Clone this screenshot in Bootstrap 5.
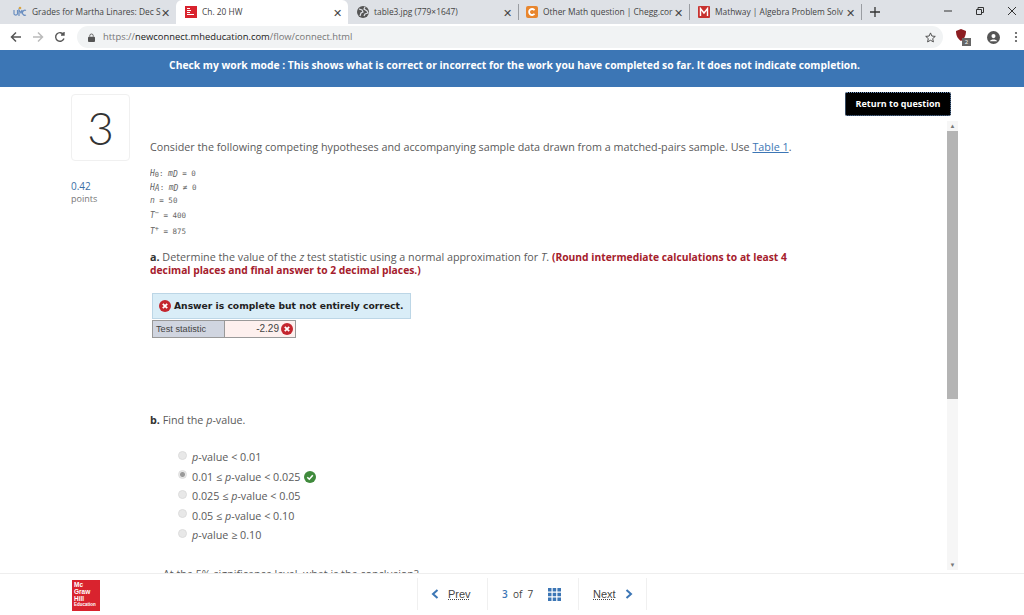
<!DOCTYPE html>
<html lang="en">
<head>
    <meta charset="UTF-8">
    <meta name="viewport" content="width=device-width, initial-scale=1.0">
    <title>Ch. 20 HW</title>
    <link href="https://cdn.jsdelivr.net/npm/bootstrap@5.3.0/dist/css/bootstrap.min.css" rel="stylesheet">
    <style>
        html, body { height: 615px; overflow: hidden; }
        body { font-family: "Open Sans", sans-serif; color: #5a5a5a; background: #fff; }

        /* browser chrome */
        .tab-strip { height: 24px; background: #dee1e6; font-size: 8.4px; color: #444; }
        .tab-item { height: 24px; padding: 0 5px 0 13px; gap: 5px; }
        .tab-item.is-on { background: #fff; border-radius: 6px 6px 0 0; }
        .tab-label { flex: 1; min-width: 0; white-space: nowrap; }
        .tab-x { font-size: 11px; color: #444; line-height: 1; width: 12px; text-align: center; flex: none; }
        .tab-sep { width: 1px; height: 16px; background: #9a9da2; }
        .tool-row { height: 26px; background: #fff; gap: 10px; padding: 0 6px 0 10px; }
        .url-pill { height: 22px; background: #f1f3f4; border-radius: 11px; font-size: 9.4px; color: #777; padding: 0 7px 0 11px; margin-left: 1px; margin-right: 2px; width: 866px; }
        .url-pill b { font-weight: 400; color: #222; }
        .ublock-wrap { width: 14px; height: 14px; margin-top: -2px; }
        .ublock-num { right: -2px; bottom: -3px; width: 9px; height: 8px; font-size: 6px; line-height: 8px; background: #666; color: #fff; text-align: center; }

        /* banner */
        .mode-banner { height: 37px; background: #3c76b5; color: #fff; font-size: 10.3px; font-weight: 700; line-height: 30px; text-align: center; padding-left: 5px; }

        /* question area */
        .q-area { height: 486px; }
        .q-side { width: 79px; margin-left: 71px; flex: none; }
        .q-numbox { width: 59px; height: 67px; margin-top: 7px; border: 1px solid #f0f0f0; border-radius: 4px; font-size: 46px; line-height: 66px; color: #333; text-align: center; font-family: "Lato", sans-serif; font-weight: 300; }
        .q-score { font-size: 10px; color: #3a6ea5; margin-top: 19px; line-height: 12px; }
        .q-pts { font-size: 9px; color: #777; line-height: 12px; margin-top: 1px; }
        .q-main { width: 650px; flex: none; overflow: hidden; padding-top: 53px; font-size: 10.75px; }
        .q-line { line-height: 14px; white-space: nowrap; }
        .q-main a { color: #3c76b5; }
        .hypo-list { margin-top: 13px; font-family: "DejaVu Sans Mono", monospace; font-size: 7.5px; color: #666; }
        .hypo-list div { height: 13.5px; line-height: 13.5px; }
        .hypo-list .tall { height: 16px; line-height: 16px; }
        .hypo-list i { font-size: 8px; }
        .hypo-list sub, .hypo-list sup { font-size: 7px; }
        .hypo-list sup { top: -0.3em; }
        .hypo-list sub { bottom: -0.2em; }
        .part-a { margin-top: 11px; line-height: 13px; }
        .part-tag { font-weight: 700; color: #333; }
        .warn-text { color: #a5202c; font-weight: 700; font-size: 10.3px; }
        .ans-box { width: 259px; height: 26px; margin-top: 16px; margin-left: 2px; background: #d9edf7; border: 1px solid #bcd6e6; font-family: "DejaVu Sans", sans-serif; font-size: 9.2px; font-weight: 700; color: #222; gap: 3px; padding-left: 6px; white-space: nowrap; }
        .ans-grid { width: 144px; height: 18px; margin-top: 1px; margin-left: 2px; border: 1px solid #999; font-family: "Liberation Sans", sans-serif; font-size: 9.2px; }
        .ans-key { width: 72px; background: #d0d5e0; border-right: 1px solid #999; padding-left: 3px; color: #444; line-height: 16px; }
        .ans-val { flex: 1; background: #fdf0ee; color: #444; gap: 2px; padding-right: 2px; font-size: 10px; }
        .part-b { margin-top: 75px; line-height: 14px; }
        .opt-list { margin-top: 21px; margin-left: 28px; }
        .opt-row { height: 19.5px; gap: 5px; white-space: nowrap; }
        .opt-dot { width: 9px; height: 9px; border-radius: 50%; background: #e8e8e8; border: 1px solid #ddd; margin-top: -4px; flex: none; }
        .opt-dot.is-on { background: radial-gradient(circle, #999 0 2px, #e8e8e8 3px); }
        .cut-line { margin-top: 21px; margin-left: 13px; white-space: nowrap; }

        .q-right { flex: 1; padding-right: 66px; }
        .back-btn { width: 106px; height: 24px; margin-top: 5px; margin-right: 7px; background: #000; color: #fff; font-size: 9px; font-weight: 700; border: 1px dotted #6d94c4; border-radius: 2px; padding: 0; line-height: 20px; flex: none; }
        .scroll-track { width: 11px; height: 449px; margin-top: 5px; background: #f6f6f6; }
        .scroll-btn { height: 10px; color: #777; font-size: 6px; line-height: 10px; text-align: center; flex: none; }
        .scroll-thumb { height: 268px; background: #b4b4b4; flex: none; }

        /* footer */
        .page-foot { height: 42px; border-top: 1px solid #eee; }
        .foot-logo { margin-left: 72px; width: 28px; height: 31px; background: #d9232e; color: #fff; font-family: "Liberation Sans", sans-serif; font-size: 6.5px; font-weight: 700; line-height: 6.8px; padding: 2px; margin-top: 6px; flex: none; }
        .foot-logo small { font-size: 4.5px; font-weight: 700; display: block; }
        .foot-nav { margin-left: 317px; margin-top: 4px; height: 32px; font-family: "Liberation Sans", sans-serif; font-size: 11px; color: #444; }
        .foot-cell { height: 32px; border-left: 1px solid #f0f0f0; }
        .foot-link { color: #444; text-decoration: underline dotted; }
        .foot-count { font-family: "Open Sans", sans-serif; font-size: 10px; }
        .foot-count b { color: #3c76b5; font-weight: 600; }
    </style>
</head>
<body>
    <!-- tabs -->
    <div class="tab-strip d-flex align-items-center">
        <div class="tab-item d-flex align-items-center" style="width:176px">
            <svg width="14" height="12" viewBox="0 0 14 12"><path d="M1 4v4a2 2 0 0 0 3.500 0V4M6 10V4l2 3 1-3M13 4.500a2.500 2.500 0 1 0 0 4.500" fill="none" stroke="#6b8fc0" stroke-width="1.200"/><circle cx="7" cy="2" r="1.300" fill="#d9a441"/></svg>
            <span class="tab-label">Grades for Martha Linares: Dec S</span><span class="tab-x">✕</span>
        </div>
        <div class="tab-item is-on d-flex align-items-center" style="width:172px;padding-left:9px">
            <svg width="12" height="12" viewBox="0 0 12 12"><rect width="12" height="12" fill="#d9232e"/><path d="M2 2.500h3M2 4.500h4M2 6.500h3M2 8.500h7" stroke="#fff" stroke-width="1"/></svg>
            <span class="tab-label">Ch. 20 HW</span><span class="tab-x">✕</span>
        </div>
        <div class="tab-item d-flex align-items-center" style="width:170px;padding-left:9px">
            <svg width="12" height="12" viewBox="0 0 12 12"><circle cx="6" cy="6" r="6" fill="#555"/><path d="M2 3l3 1 1 2-2 1-1 3M8 1L7 3l3 2 1 2-3 1-1 2" fill="none" stroke="#dee1e6" stroke-width="1.200"/></svg>
            <span class="tab-label">table3.jpg (779×1647)</span><span class="tab-x">✕</span>
        </div>
        <div class="tab-sep"></div>
        <div class="tab-item d-flex align-items-center" style="width:170px;padding-left:7px">
            <svg width="12" height="12" viewBox="0 0 12 12"><rect width="12" height="12" rx="2" fill="#e8862e"/><path d="M8.500 4.200a3 3 0 1 0 0 3.600" fill="none" stroke="#fff" stroke-width="1.800"/></svg>
            <span class="tab-label">Other Math question | Chegg.cor</span><span class="tab-x">✕</span>
        </div>
        <div class="tab-sep"></div>
        <div class="tab-item d-flex align-items-center" style="width:171px;padding-left:8px">
            <svg width="12" height="12" viewBox="0 0 12 12"><rect width="12" height="12" rx="1" fill="#c8322f"/><path d="M2.500 10V2.500L6 7l3.500-4.500V10" fill="none" stroke="#fff" stroke-width="1.400"/></svg>
            <span class="tab-label">Mathway | Algebra Problem Solv</span><span class="tab-x">✕</span>
        </div>
        <div class="tab-sep"></div>
        <svg class="ms-2" width="10" height="10" viewBox="0 0 10 10"><path d="M5 0v10M0 5h10" stroke="#333" stroke-width="1.300"/></svg>
        <div class="ms-auto d-flex align-items-center" style="gap:22px;padding-right:7px;margin-top:-3px">
            <svg width="10" height="10" viewBox="0 0 10 10"><path d="M1 5h8" stroke="#333"/></svg>
            <svg width="10" height="10" viewBox="0 0 10 10"><path d="M1.500 3.500h5v5h-5zM3 3.500V1.500h5.500v5H6.500" fill="none" stroke="#333"/></svg>
            <svg width="10" height="10" viewBox="0 0 10 10"><path d="M1 1l8 8M9 1l-8 8" stroke="#333"/></svg>
        </div>
    </div>

    <!-- toolbar -->
    <div class="tool-row d-flex align-items-center">
        <svg width="12" height="12" viewBox="0 0 12 12"><path d="M11 6H1.500M6 1.500L1.500 6 6 10.500" fill="none" stroke="#555" stroke-width="1.500"/></svg>
        <svg width="12" height="12" viewBox="0 0 12 12"><path d="M1 6h9.500M6 1.500L10.500 6 6 10.500" fill="none" stroke="#bbb" stroke-width="1.500"/></svg>
        <svg width="12" height="12" viewBox="0 0 12 12"><path d="M10 7.500A4.300 4.300 0 1 1 9.500 3.500M10 1v3H7" fill="none" stroke="#555" stroke-width="1.400"/></svg>
        <div class="url-pill d-flex align-items-center">
            <svg class="me-2" width="7" height="9" viewBox="0 0 8 10"><path d="M2 4V3a2 2 0 0 1 4 0v1" fill="none" stroke="#555"/><rect y="4" width="8" height="6" rx="1" fill="#555"/></svg>
            <span>https://<b>newconnect.mheducation.com</b>/flow/connect.html</span>
            <svg class="ms-auto" width="11" height="11" viewBox="0 0 12 12"><path d="M6 1l1.500 3.400 3.700.4-2.800 2.400.8 3.600L6 9l-3.200 1.800.8-3.600L.8 4.800l3.700-.4z" fill="none" stroke="#444"/></svg>
        </div>
        <span class="ublock-wrap position-relative d-flex">
            <svg width="12" height="12" viewBox="0 0 12 12"><path d="M1 2l5-2 5 2c0 5-2 8-5 10C3 10 1 7 1 2z" fill="#8c1d22"/></svg>
            <span class="ublock-num position-absolute">2</span>
        </span>
        <svg class="ms-2" width="13" height="13" viewBox="0 0 14 14"><circle cx="7" cy="7" r="7" fill="#555"/><circle cx="7" cy="5.500" r="2.200" fill="#fff"/><path d="M3 11c1-2.500 7-2.500 8 0" fill="#fff"/></svg>
        <svg class="ms-1" width="4" height="12" viewBox="0 0 4 12"><circle cx="2" cy="2" r="1.100" fill="#555"/><circle cx="2" cy="6" r="1.100" fill="#555"/><circle cx="2" cy="10" r="1.100" fill="#555"/></svg>
    </div>

    <div class="mode-banner">Check my work mode : This shows what is correct or incorrect for the work you have completed so far. It does not indicate completion.</div>

    <div class="q-area d-flex">
        <div class="q-side">
            <div class="q-numbox">3</div>
            <div class="q-score">0.42</div>
            <div class="q-pts">points</div>
        </div>

        <div class="q-main">
            <div class="q-line">Consider the following competing hypotheses and accompanying sample data drawn from a matched-pairs sample. Use <a href="#">Table 1</a>.</div>
            <div class="hypo-list">
                <div><i>H</i><sub>0</sub>: <i>m</i><sub><i>D</i></sub> = 0</div>
                <div><i>H</i><sub><i>A</i></sub>: <i>m</i><sub><i>D</i></sub> ≠ 0</div>
                <div><i>n</i> = 50</div>
                <div class="tall"><i>T</i><sup>−</sup> = 400</div>
                <div class="tall"><i>T</i><sup>+</sup> = 875</div>
            </div>
            <div class="part-a"><span class="part-tag">a.</span> Determine the value of the <i>z</i> test statistic using a normal approximation for <i>T</i>. <span class="warn-text">(Round intermediate calculations to at least 4<br>decimal places and final answer to 2 decimal places.)</span></div>

            <div class="ans-box d-flex align-items-center">
                <svg width="12" height="12" viewBox="0 0 12 12"><circle cx="6" cy="6" r="6" fill="#c4262e"/><path d="M3.800 3.800l4.400 4.400M8.200 3.800L3.800 8.200" stroke="#fff" stroke-width="1.800"/></svg>
                Answer is complete but not entirely correct.
            </div>
            <div class="ans-grid d-flex">
                <div class="ans-key">Test statistic</div>
                <div class="ans-val d-flex align-items-center justify-content-end">-2.29
                    <svg width="12" height="12" viewBox="0 0 12 12"><circle cx="6" cy="6" r="6" fill="#c4262e"/><path d="M3.800 3.800l4.400 4.400M8.200 3.800L3.800 8.200" stroke="#fff" stroke-width="1.800"/></svg>
                </div>
            </div>

            <div class="part-b"><span class="part-tag">b.</span> Find the <i>p</i>-value.</div>
            <div class="opt-list">
                <div class="opt-row d-flex align-items-center"><span class="opt-dot"></span><span><i>p</i>-value &lt; 0.01</span></div>
                <div class="opt-row d-flex align-items-center"><span class="opt-dot is-on"></span><span>0.01 ≤ <i>p</i>-value &lt; 0.025</span>
                    <svg style="margin-left:-2px" width="12" height="12" viewBox="0 0 12 12"><circle cx="6" cy="6" r="6" fill="#3f8a3c"/><path d="M3.300 6.200l2 2 3.500-4" fill="none" stroke="#fff" stroke-width="1.600"/></svg>
                </div>
                <div class="opt-row d-flex align-items-center"><span class="opt-dot"></span><span>0.025 ≤ <i>p</i>-value &lt; 0.05</span></div>
                <div class="opt-row d-flex align-items-center"><span class="opt-dot"></span><span>0.05 ≤ <i>p</i>-value &lt; 0.10</span></div>
                <div class="opt-row d-flex align-items-center"><span class="opt-dot"></span><span><i>p</i>-value ≥ 0.10</span></div>
            </div>
            <div class="cut-line">At the 5% significance level, what is the conclusion?</div>
        </div>

        <div class="q-right d-flex flex-column align-items-end">
            <button type="button" class="back-btn">Return to question</button>
            <div class="scroll-track d-flex flex-column">
                <div class="scroll-btn">▲</div>
                <div class="scroll-thumb"></div>
                <div class="scroll-btn mt-auto">▼</div>
            </div>
        </div>
    </div>

    <div class="page-foot d-flex">
        <div class="foot-logo">Mc<br>Graw<br>Hill<small>Education</small></div>
        <div class="foot-nav d-flex">
            <div class="foot-cell d-flex align-items-center" style="width:70px;padding-left:13px;gap:9px">
                <svg width="8" height="10" viewBox="0 0 8 10"><path d="M6.500 1L2 5l4.500 4" fill="none" stroke="#3c76b5" stroke-width="2"/></svg>
                <a class="foot-link" href="#">Prev</a>
            </div>
            <div class="foot-cell foot-count d-flex align-items-center" style="width:91px;padding-left:14px">
                <span><b>3</b>&nbsp; of &nbsp;7</span>
                <svg style="margin-left:15px" width="13" height="13" viewBox="0 0 13 13" fill="#3c76b5"><path d="M0 0h3.500v3.500H0zM4.700 0h3.500v3.500H4.700zM9.400 0H13v3.500H9.400zM0 4.700h3.500v3.500H0zM4.700 4.700h3.500v3.500H4.700zM9.400 4.700H13v3.500H9.400zM0 9.400h3.500V13H0zM4.700 9.400h3.500V13H4.700zM9.400 9.400H13V13H9.400z"/></svg>
            </div>
            <div class="foot-cell d-flex align-items-center" style="width:69px;padding-left:14px;gap:9px;border-right:1px solid #f0f0f0">
                <a class="foot-link" href="#">Next</a>
                <svg width="8" height="10" viewBox="0 0 8 10"><path d="M1.500 1L6 5 1.500 9" fill="none" stroke="#3c76b5" stroke-width="2"/></svg>
            </div>
        </div>
    </div>

    <script src="https://cdn.jsdelivr.net/npm/bootstrap@5.3.0/dist/js/bootstrap.bundle.min.js"></script>
</body>
</html>
